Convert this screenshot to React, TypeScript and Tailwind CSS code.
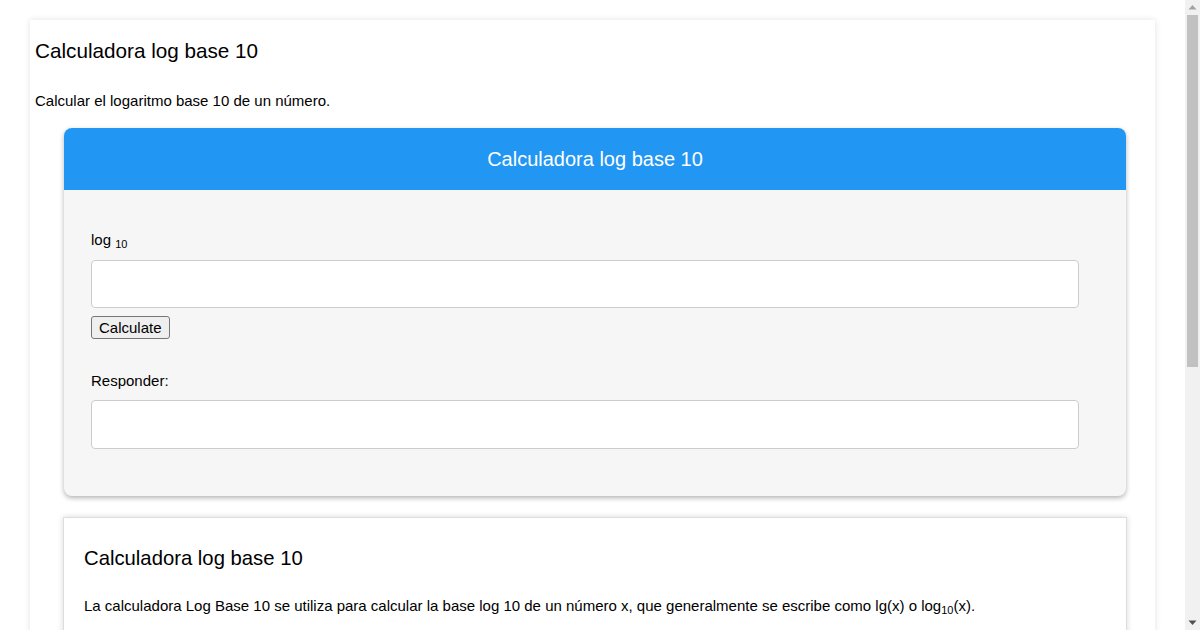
import React, { useState } from 'react';

export default function App() {
  const [value, setValue] = useState('');
  const [answer, setAnswer] = useState('');

  const calculate = () => {
    const x = parseFloat(value);
    if (!isNaN(x) && x > 0) setAnswer(String(Math.log10(x)));
    else setAnswer('');
  };

  return (
    <div className="flex h-[630px] overflow-hidden bg-white text-black" style={{ fontFamily: '"Liberation Sans", Arial, sans-serif' }}>
      <div className="min-w-0 flex-1 pt-5">
        <div className="mx-[30px] bg-white px-[5px] pb-10 shadow-[0_0_6px_rgba(0,0,0,0.12)]">
          <h1 className="pt-[19px] text-[20.7px] leading-[24px]">Calculadora log base 10</h1>
          <p className="mt-[29px] text-[15px] leading-[18px]">Calcular el logaritmo base 10 de un número.</p>

          {/* calculator */}
          <div className="ml-[29px] mt-[18px] w-[1062px] overflow-hidden rounded-[8px] bg-[#f6f6f6] shadow-[0_2px_5px_rgba(0,0,0,0.3)]">
            <div className="flex h-[62px] items-center justify-center bg-[#2196f3] text-[20px] text-white">
              Calculadora log base 10
            </div>
            <div className="px-[27px] pb-[47px] pt-[41px]">
              <label className="block text-[15px] leading-[18px]">
                log <sub className="text-[11px]">10</sub>
              </label>
              <input
                value={value}
                onChange={(e) => setValue(e.target.value)}
                className="mt-[11px] block h-[48px] w-[988px] rounded-[4px] border border-[#ccc] bg-white px-3 text-[15px] outline-none"
              />
              <button
                onClick={calculate}
                className="mt-2 block rounded-[3px] border border-[#767676] bg-[#efefef] px-[7px] py-[1px] text-[15px] leading-[19px]"
              >
                Calculate
              </button>
              <label className="mt-[33px] block text-[15px] leading-[18px]">Responder:</label>
              <input
                readOnly
                value={answer}
                className="mt-[10px] block h-[49px] w-[988px] rounded-[4px] border border-[#ccc] bg-white px-3 text-[15px] outline-none"
              />
            </div>
          </div>

          {/* info card */}
          <div className="ml-[28px] mt-[21px] w-[1064px] border border-[#ddd] bg-white px-5 pb-8 pt-[28px] shadow-[0_0_6px_rgba(0,0,0,0.15)]">
            <h2 className="text-[20.3px] leading-[24px]">Calculadora log base 10</h2>
            <p className="mt-[27px] text-[15px] leading-[18px]">
              La calculadora Log Base 10 se utiliza para calcular la base log 10 de un número x, que generalmente se escribe como lg(x) o log<sub className="text-[11px]">10</sub>(x).
            </p>
          </div>
        </div>
      </div>

      {/* browser scrollbar */}
      <div className="flex w-[15px] shrink-0 flex-col items-center bg-[#f1f1f1]">
        <svg width="15" height="15" viewBox="0 0 15 15" className="shrink-0">
          <path d="M3.5 9.5 L7.5 5 L11.5 9.5 Z" fill="#a3a3a3" />
        </svg>
        <div className="h-[352px] w-[11px] shrink-0 bg-[#c1c1c1]" />
        <div className="flex-1" />
        <svg width="15" height="15" viewBox="0 0 15 15" className="shrink-0">
          <path d="M3.5 5.5 L11.5 5.5 L7.5 10 Z" fill="#505050" />
        </svg>
      </div>
    </div>
  );
}
